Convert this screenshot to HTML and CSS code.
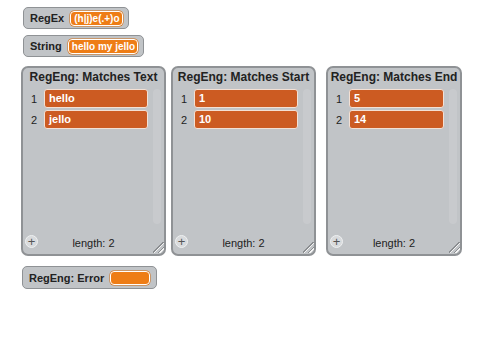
FILE: index.html
```html
<!DOCTYPE html>
<html>
<head>
<meta charset="utf-8">
<link rel="stylesheet" href="styles.css">
</head>
<body>
<div class="stage">
  <div class="watcher w-regex">
    <span class="label">RegEx</span>
    <span class="pill">(h|j)e(.+)o</span>
  </div>
  <div class="watcher w-string">
    <span class="label">String</span>
    <span class="pill">hello my jello</span>
  </div>
  <div class="lists">
    <div class="list l1">
      <div class="title">RegEng: Matches Text</div>
      <div class="body">
        <div class="items">
          <div class="row"><span class="idx">1</span><span class="cell">hello</span></div>
          <div class="row"><span class="idx">2</span><span class="cell">jello</span></div>
        </div>
        <div class="scroll"></div>
      </div>
      <div class="foot"><span class="plus">+</span><span class="len">length: 2</span><span class="grip"></span></div>
    </div>
    <div class="list l2">
      <div class="title">RegEng: Matches Start</div>
      <div class="body">
        <div class="items">
          <div class="row"><span class="idx">1</span><span class="cell">1</span></div>
          <div class="row"><span class="idx">2</span><span class="cell">10</span></div>
        </div>
        <div class="scroll"></div>
      </div>
      <div class="foot"><span class="plus">+</span><span class="len">length: 2</span><span class="grip"></span></div>
    </div>
    <div class="list l3">
      <div class="title">RegEng: Matches End</div>
      <div class="body">
        <div class="items">
          <div class="row"><span class="idx">1</span><span class="cell">5</span></div>
          <div class="row"><span class="idx">2</span><span class="cell">14</span></div>
        </div>
        <div class="scroll"></div>
      </div>
      <div class="foot"><span class="plus">+</span><span class="len">length: 2</span><span class="grip"></span></div>
    </div>
  </div>
  <div class="watcher w-error">
    <span class="label">RegEng: Error</span>
    <span class="pill empty"></span>
  </div>
</div>
</body>
</html>
```
FILE: styles.css
```css
* { box-sizing: border-box; }
html, body { margin: 0; background: #fff; }
body { font-family: "Liberation Sans", Arial, sans-serif; color: #222; }
.stage {
  display: flex;
  flex-direction: column;
  align-items: flex-start;
  padding: 7px 0 0 21px;
  width: 480px;
  height: 360px;
}
.watcher {
  display: flex;
  align-items: center;
  height: 22px;
  background: #c1c4c7;
  border: 1px solid #8f9295;
  border-radius: 5px;
  padding: 0 5px 0 6px;
  gap: 6px;
}
.w-regex { margin-left: 2px; }
.w-string { margin-left: 2px; margin-top: 6px; }
.w-error { margin-left: 1px; margin-top: 10px; height: 23px; padding-right: 6px; }
.label { font-weight: bold; font-size: 11px; color: #222; }
.pill {
  background: #ee7d16;
  color: #fff;
  font-weight: bold;
  font-size: 10px;
  line-height: 12px;
  height: 15px;
  padding: 1px 2px 0 3px;
  border: 1px solid #fff;
  border-radius: 4px;
  box-shadow: 0 0 0 0.5px #d06a10;
}
.pill.empty { width: 40px; height: 14px; }
.lists {
  display: flex;
  margin-top: 9px;
}
.list {
  width: 145px;
  height: 190px;
  background: #c1c4c7;
  border: 2px solid #8f9295;
  border-radius: 7px;
  display: flex;
  flex-direction: column;
}
.l2 { margin-left: 5px; }
.l3 { margin-left: 10px; width: 136px; }
.title {
  font-weight: bold;
  font-size: 12px;
  text-align: center;
  height: 20px;
  line-height: 18px;
  color: #222;
}
.body {
  flex: 1;
  display: flex;
  padding-top: 1px;
}
.items {
  flex: 1;
  display: flex;
  flex-direction: column;
  gap: 2px;
}
.row {
  display: flex;
  align-items: center;
}
.idx {
  width: 21px;
  text-align: center;
  font-size: 11px;
  padding-left: 1px;
}
.cell {
  flex: 1;
  height: 19px;
  background: #cc5b22;
  border: 1px solid #f3e0d4;
  border-radius: 3px;
  color: #fff;
  font-weight: bold;
  font-size: 11px;
  line-height: 17px;
  padding-left: 4px;
}
.scroll {
  width: 8px;
  margin: 0 3px 8px 5px;
  background: #c8cacd;
  border-radius: 4px;
}
.foot {
  height: 22px;
  display: flex;
  align-items: center;
  justify-content: center;
  position: relative;
}
.len { font-size: 11px; color: #222; }
.plus {
  position: absolute;
  left: 2px;
  top: 3px;
  width: 13px;
  height: 13px;
  border-radius: 50%;
  background: #d9dbdd;
  border: 1px solid #eef0f1;
  color: #555;
  font-size: 13px;
  line-height: 11px;
  text-align: center;
}
.grip {
  position: absolute;
  right: 0;
  bottom: 1px;
  width: 11px;
  height: 11px;
  background: linear-gradient(135deg, transparent 0 45%, #8a8d90 45% 52%, #f4f4f4 52% 59%, transparent 59% 70%, #8a8d90 70% 77%, #f4f4f4 77% 84%, transparent 84%);
}
```
